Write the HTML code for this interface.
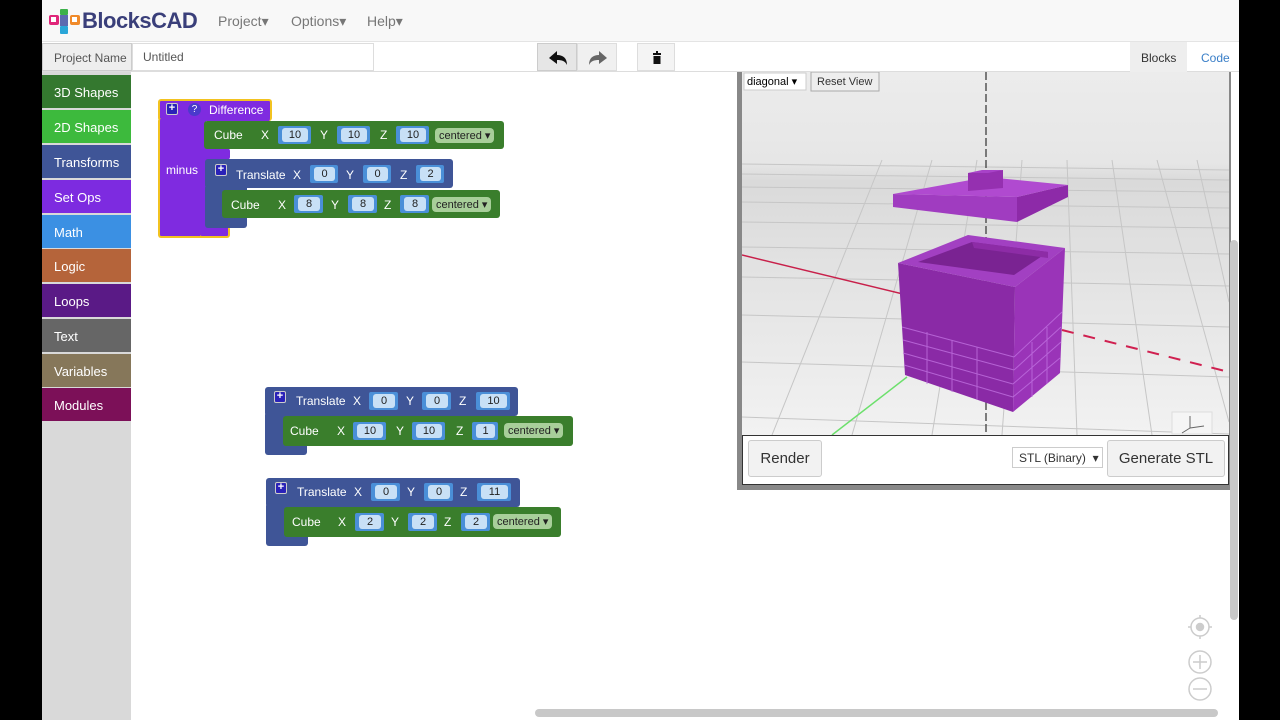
<!DOCTYPE html>
<html><head><meta charset="utf-8"><style>
*{box-sizing:border-box;margin:0;padding:0}
body{width:1280px;height:720px;background:#000;font-family:"Liberation Sans",sans-serif;position:relative;overflow:hidden}
.app{position:absolute;left:42px;top:0;width:1197px;height:720px;background:#fff}
.nav{position:absolute;left:0;top:0;width:1197px;height:42px;background:#f8f8f8;border-bottom:1px solid #e4e4e4}
.nav span{position:absolute;top:13px;font-size:14px;color:#777}
.tb{position:absolute;left:0;top:42px;width:1197px;height:30px;background:#fff;border-bottom:1px solid #ddd}
.side{position:absolute;left:0;top:72px;width:89px;height:648px;background:#d9d9d9}
.cat{position:absolute;left:0;width:89px;height:33px;color:#fff;font-size:13px;padding:10px 0 0 12px}
.a{position:absolute}
.blk{position:absolute;border-radius:3px}
.t{position:absolute;color:#fff;font-size:12px}
.num{position:absolute;height:18px;background:#4a8fd8;border-radius:2px}
.num i{position:absolute;left:4px;top:2px;right:3px;bottom:2px;background:#c8e0f6;border-radius:3px;font-style:normal;font-size:11px;color:#222;text-align:center;line-height:14px}
.dd{position:absolute;height:15px;background:#a8cf9a;border-radius:4px;font-size:11px;color:#222;padding:1px 4px}
.plus{position:absolute;width:12px;height:12px;background:#2a22b8;border:1px solid #ccc;border-radius:2px;color:#fff;font-size:11px;line-height:9px;text-align:center;font-weight:bold}
</style></head><body>
<div class="app">
 <div class="nav">
  <svg class="a" style="left:6px;top:8px" width="34" height="28"><rect x="1" y="7" width="10" height="10" rx="2" fill="#e0267a"/><rect x="3" y="9" width="5" height="5" fill="#fff"/><rect x="22" y="7" width="10" height="10" rx="2" fill="#f08a2a"/><rect x="24" y="9" width="5" height="5" fill="#fff"/><rect x="12" y="1" width="8" height="6" rx="1" fill="#3cb14a"/><rect x="12" y="18" width="8" height="8" rx="1" fill="#2aa6d8"/><rect x="12" y="7" width="8" height="11" fill="#5c6ab0"/></svg>
  <div class="a" style="left:40px;top:8px;font-size:22px;font-weight:bold;color:#3a3f7a;letter-spacing:-0.5px">BlocksCAD</div>
  <span style="left:176px">Project▾</span><span style="left:249px">Options▾</span><span style="left:325px">Help▾</span>
 </div>
 <div class="tb">
  <div class="a" style="left:0;top:1px;width:90px;height:28px;background:#eee;border:1px solid #ccc;font-size:12px;color:#555;padding:7px 0 0 11px">Project Name</div>
  <div class="a" style="left:90px;top:1px;width:242px;height:28px;border:1px solid #ddd;font-size:12px;color:#555;padding:6px 0 0 10px">Untitled</div>
  <div class="a" style="left:495px;top:1px;width:40px;height:28px;background:#e6e6e6;border:1px solid #ccc"><svg width="40" height="28"><path d="M11 14 L19 7 V11 C25 11 29 14 29 21 C27 17 24 16 19 16 V20 Z" fill="#111"/></svg></div>
  <div class="a" style="left:535px;top:1px;width:40px;height:28px;background:#f0f0f0;border:1px solid #ddd"><svg width="40" height="28"><path d="M29 14 L21 7 V11 C15 11 11 14 11 21 C13 17 16 16 21 16 V20 Z" fill="#666"/></svg></div>
  <div class="a" style="left:595px;top:1px;width:38px;height:28px;background:#f4f4f4;border:1px solid #ddd"><svg width="38" height="28"><rect x="15" y="9" width="8" height="2" fill="#111"/><rect x="18" y="7" width="2" height="2" fill="#111"/><rect x="15.5" y="12" width="7" height="8" fill="#111"/></svg></div>
  <div class="a" style="left:1088px;top:0;width:57px;height:30px;background:#eee;font-size:12px;color:#333;padding:9px 0 0 11px">Blocks</div>
  <div class="a" style="left:1159px;top:9px;font-size:12px;color:#3a7fc8">Code</div>
 </div>
 <div class="side">
  <div class="cat" style="top:3px;background:#34782f">3D Shapes</div>
  <div class="cat" style="top:38px;background:#3dba3d">2D Shapes</div>
  <div class="cat" style="top:73px;background:#3f5597">Transforms</div>
  <div class="cat" style="top:108px;background:#7d2be0">Set Ops</div>
  <div class="cat" style="top:143px;background:#3b90e3">Math</div>
  <div class="cat" style="top:177px;background:#b5643a">Logic</div>
  <div class="cat" style="top:212px;background:#5a1a86">Loops</div>
  <div class="cat" style="top:247px;background:#666">Text</div>
  <div class="cat" style="top:282px;background:#86775a">Variables</div>
  <div class="cat" style="top:316px;background:#7c1058">Modules</div>
 </div>
</div>

<!-- Difference block -->
<div class="blk" style="left:158px;top:99px;width:114px;height:22px;background:#7f2be0;border:2px solid #f2c320;border-bottom:none"></div>
<div class="blk" style="left:158px;top:118px;width:48px;height:120px;background:#7f2be0;border:2px solid #f2c320;border-top:none;border-right:none"></div>
<div class="blk" style="left:200px;top:148px;width:30px;height:12px;background:#7f2be0"></div>
<div class="blk" style="left:200px;top:226px;width:30px;height:12px;background:#7f2be0;border-bottom:2px solid #f2c320;border-right:2px solid #f2c320"></div>
<div class="plus" style="left:166px;top:103px">+</div>
<div class="a" style="left:188px;top:103px;width:13px;height:13px;border-radius:50%;background:#4a3acc;color:#fff;font-size:10px;text-align:center;line-height:13px">?</div>
<div class="t" style="left:209px;top:103px">Difference</div>
<div class="t" style="left:166px;top:163px">minus</div>

<div class="blk" style="left:204px;top:121px;width:300px;height:28px;background:#3a7e2c"></div>
<div class="t" style="left:214px;top:128px">Cube</div>
<div class="t" style="left:261px;top:128px">X</div><div class="num" style="left:278px;top:126px;width:33px"><i>10</i></div>
<div class="t" style="left:320px;top:128px">Y</div><div class="num" style="left:337px;top:126px;width:33px"><i>10</i></div>
<div class="t" style="left:380px;top:128px">Z</div><div class="num" style="left:396px;top:126px;width:33px"><i>10</i></div>
<div class="dd" style="left:435px;top:128px">centered ▾</div>

<div class="blk" style="left:205px;top:159px;width:248px;height:29px;background:#3f5597"></div>
<div class="blk" style="left:205px;top:185px;width:42px;height:43px;background:#3f5597"></div>
<div class="plus" style="left:215px;top:164px">+</div>
<div class="t" style="left:236px;top:168px">Translate</div>
<div class="t" style="left:293px;top:168px">X</div><div class="num" style="left:310px;top:165px;width:28px"><i>0</i></div>
<div class="t" style="left:346px;top:168px">Y</div><div class="num" style="left:363px;top:165px;width:28px"><i>0</i></div>
<div class="t" style="left:400px;top:168px">Z</div><div class="num" style="left:416px;top:165px;width:28px"><i>2</i></div>
<div class="blk" style="left:222px;top:190px;width:278px;height:28px;background:#3a7e2c"></div>
<div class="t" style="left:231px;top:198px">Cube</div>
<div class="t" style="left:278px;top:198px">X</div><div class="num" style="left:294px;top:195px;width:29px"><i>8</i></div>
<div class="t" style="left:331px;top:198px">Y</div><div class="num" style="left:348px;top:195px;width:29px"><i>8</i></div>
<div class="t" style="left:384px;top:198px">Z</div><div class="num" style="left:400px;top:195px;width:29px"><i>8</i></div>
<div class="dd" style="left:432px;top:197px">centered ▾</div>

<!-- Translate 2 -->
<div class="blk" style="left:265px;top:387px;width:253px;height:29px;background:#3f5597"></div>
<div class="blk" style="left:265px;top:412px;width:42px;height:43px;background:#3f5597"></div>
<div class="plus" style="left:274px;top:391px">+</div>
<div class="t" style="left:296px;top:394px">Translate</div>
<div class="t" style="left:353px;top:394px">X</div><div class="num" style="left:369px;top:392px;width:29px"><i>0</i></div>
<div class="t" style="left:406px;top:394px">Y</div><div class="num" style="left:422px;top:392px;width:29px"><i>0</i></div>
<div class="t" style="left:459px;top:394px">Z</div><div class="num" style="left:476px;top:392px;width:34px"><i>10</i></div>
<div class="blk" style="left:283px;top:416px;width:290px;height:30px;background:#3a7e2c"></div>
<div class="t" style="left:290px;top:424px">Cube</div>
<div class="t" style="left:337px;top:424px">X</div><div class="num" style="left:353px;top:422px;width:33px"><i>10</i></div>
<div class="t" style="left:396px;top:424px">Y</div><div class="num" style="left:412px;top:422px;width:33px"><i>10</i></div>
<div class="t" style="left:456px;top:424px">Z</div><div class="num" style="left:472px;top:422px;width:26px"><i>1</i></div>
<div class="dd" style="left:504px;top:423px">centered ▾</div>

<!-- Translate 3 -->
<div class="blk" style="left:266px;top:478px;width:254px;height:29px;background:#3f5597"></div>
<div class="blk" style="left:266px;top:503px;width:42px;height:43px;background:#3f5597"></div>
<div class="plus" style="left:275px;top:482px">+</div>
<div class="t" style="left:297px;top:485px">Translate</div>
<div class="t" style="left:354px;top:485px">X</div><div class="num" style="left:371px;top:483px;width:29px"><i>0</i></div>
<div class="t" style="left:407px;top:485px">Y</div><div class="num" style="left:424px;top:483px;width:29px"><i>0</i></div>
<div class="t" style="left:460px;top:485px">Z</div><div class="num" style="left:477px;top:483px;width:34px"><i>11</i></div>
<div class="blk" style="left:284px;top:507px;width:277px;height:30px;background:#3a7e2c"></div>
<div class="t" style="left:292px;top:515px">Cube</div>
<div class="t" style="left:338px;top:515px">X</div><div class="num" style="left:355px;top:513px;width:29px"><i>2</i></div>
<div class="t" style="left:391px;top:515px">Y</div><div class="num" style="left:408px;top:513px;width:29px"><i>2</i></div>
<div class="t" style="left:444px;top:515px">Z</div><div class="num" style="left:461px;top:513px;width:29px"><i>2</i></div>
<div class="dd" style="left:493px;top:514px">centered ▾</div>

<!-- 3D view -->
<div class="a" style="left:737px;top:72px;width:494px;height:418px;background:#888"></div>
<svg class="a" style="left:742px;top:72px" width="487" height="363">
 <defs><linearGradient id="g" x1="0" y1="0" x2="0" y2="1"><stop offset="0" stop-color="#ececec"/><stop offset="0.25" stop-color="#e6e6e6"/><stop offset="0.3" stop-color="#dadada"/><stop offset="1" stop-color="#f2f2f2"/></linearGradient></defs>
 <rect width="487" height="363" fill="url(#g)"/>
 <g stroke="#c6c6c6" stroke-width="1">
  <line x1="0" y1="92" x2="487" y2="98"/><line x1="0" y1="102" x2="487" y2="108"/><line x1="0" y1="115" x2="487" y2="120"/><line x1="0" y1="130" x2="487" y2="136"/><line x1="0" y1="150" x2="487" y2="156"/><line x1="0" y1="175" x2="487" y2="182"/><line x1="0" y1="205" x2="487" y2="214"/><line x1="0" y1="243" x2="487" y2="255"/><line x1="0" y1="290" x2="487" y2="305"/><line x1="0" y1="345" x2="487" y2="362"/>
  <line x1="30" y1="363" x2="140" y2="88"/><line x1="110" y1="363" x2="190" y2="88"/><line x1="190" y1="363" x2="235" y2="88"/><line x1="260" y1="363" x2="280" y2="88"/><line x1="335" y1="363" x2="325" y2="88"/><line x1="410" y1="363" x2="370" y2="88"/><line x1="487" y1="350" x2="415" y2="88"/><line x1="487" y1="230" x2="455" y2="88"/>
 </g>
 <line x1="0" y1="183" x2="165" y2="223" stroke="#c8204a" stroke-width="1.5"/>
 <line x1="320" y1="258" x2="487" y2="300" stroke="#d02050" stroke-width="2" stroke-dasharray="12,10"/>
 <line x1="90" y1="363" x2="165" y2="305" stroke="#6ce06c" stroke-width="1.5"/>
 <line x1="244" y1="0" x2="244" y2="363" stroke="#555" stroke-width="1.5" stroke-dasharray="8,3"/>
 <!-- lid -->
 <polygon points="151,122 275,125 275,150 151,135" fill="#a03cc0"/>
 <polygon points="275,125 326,113 326,125 275,150" fill="#8d2aa8"/>
 <polygon points="151,122 245,105 326,113 275,125" fill="#b04ad0"/>
 <polygon points="226,101 261,98 261,116 226,119" fill="#9530b0"/>
 <polygon points="226,101 240,98 261,98 246,101" fill="#a842c8"/>
 <!-- box -->
 <polygon points="156,191 273,215 271,340 163,303" fill="#8a2aa6"/>
 <polygon points="273,215 323,176 318,301 271,340" fill="#9a34b8"/>
 <polygon points="156,191 226,163 323,176 273,215" fill="#a240c2"/>
 <polygon points="176,190 230,170 306,180 272,203" fill="#7a2392"/>
 <polygon points="230,170 306,180 306,186 232,176" fill="#8d2ca6"/>
 <g stroke="#c070e0" stroke-width="1" opacity="0.8">
  <line x1="160" y1="255" x2="272" y2="285"/><line x1="161" y1="268" x2="272" y2="298"/><line x1="161" y1="281" x2="271" y2="312"/><line x1="162" y1="293" x2="271" y2="325"/>
  <line x1="272" y1="285" x2="320" y2="240"/><line x1="272" y1="298" x2="319" y2="255"/><line x1="271" y1="312" x2="319" y2="270"/><line x1="271" y1="325" x2="318" y2="286"/>
  <line x1="185" y1="260" x2="185" y2="312"/><line x1="210" y1="268" x2="210" y2="320"/><line x1="235" y1="275" x2="235" y2="328"/><line x1="290" y1="270" x2="290" y2="325"/><line x1="305" y1="255" x2="305" y2="312"/>
 </g>
 <rect x="430" y="340" width="40" height="22" fill="#f5f5f5" stroke="#ddd"/>
 <path d="M448 344 V356 M448 356 L462 354 M448 356 L440 361" stroke="#666" fill="none"/>
 <rect x="2" y="1" width="62" height="17" fill="#fff" stroke="#ccc"/>
 <text x="5" y="13" font-size="11" font-family="Liberation Sans">diagonal ▾</text>
 <rect x="69" y="0" width="68" height="19" fill="#eee" stroke="#aaa"/>
 <text x="75" y="13" font-size="11" font-family="Liberation Sans" fill="#333">Reset View</text>
</svg>
<div class="a" style="left:742px;top:435px;width:487px;height:50px;background:#fff;border:1px solid #333"></div>
<div class="a" style="left:748px;top:440px;width:74px;height:37px;background:#f2f2f2;border:1px solid #ccc;border-radius:3px;font-size:15px;color:#333;text-align:center;line-height:36px">Render</div>
<div class="a" style="left:1012px;top:447px;width:91px;height:21px;border:1px solid #ccc;background:#fff;font-size:12px;color:#333;padding:3px 0 0 6px">STL (Binary) &nbsp;▾</div>
<div class="a" style="left:1107px;top:440px;width:118px;height:37px;background:#f2f2f2;border:1px solid #ccc;border-radius:3px;font-size:15px;color:#333;text-align:center;line-height:36px">Generate STL</div>

<!-- scrollbars -->
<div class="a" style="left:1230px;top:240px;width:8px;height:380px;background:#c8c8c8;border-radius:4px"></div>
<div class="a" style="left:535px;top:709px;width:683px;height:8px;background:#c8c8c8;border-radius:4px"></div>
<svg class="a" style="left:1185px;top:613px" width="30" height="90" fill="none" stroke="#ccc" stroke-width="1.5">
 <circle cx="15" cy="14" r="9"/><circle cx="15" cy="14" r="3.5" fill="#ccc"/><path d="M15 2v3M15 23v3M3 14h3M24 14h3"/>
 <circle cx="15" cy="49" r="11"/><path d="M15 42v14M8 49h14"/>
 <circle cx="15" cy="76" r="11"/><path d="M8 76h14"/>
</svg>
</body></html>
